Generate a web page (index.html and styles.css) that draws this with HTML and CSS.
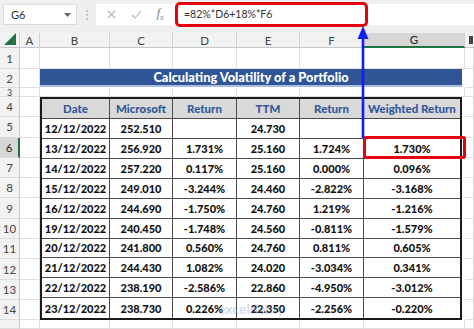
FILE: index.html
```html
<!DOCTYPE html>
<html lang="en">
<head>
    <meta charset="UTF-8">
    <title>Calculating Volatility of a Portfolio</title>
    <link rel="stylesheet" href="styles.css">
</head>
<body>
    <div class="bar">
        <div class="namebox">
            <span>G6</span>
            <svg width="7" height="4" viewBox="0 0 7 4"><path d="M0 0h7L3.5 4z" fill="#666"/></svg>
        </div>
        <div class="grip"><i></i><i></i><i></i></div>
        <div class="tools">
            <svg width="9" height="9" viewBox="0 0 9 9"><path d="M1 1l7 7M8 1L1 8" stroke="#b5b5b5" stroke-width="1.1"/></svg>
            <svg width="11" height="9" viewBox="0 0 11 9"><path d="M1 5l3 3 6-7" stroke="#b5b5b5" stroke-width="1.1" fill="none"/></svg>
            <span class="fx">f<sub>x</sub></span>
        </div>
        <div class="formula">=82%*D6+18%*F6</div>
    </div>

    <div class="sheet">
        <div class="corner"><svg width="12" height="12" viewBox="0 0 12 12"><path d="M12 0v12H0z" fill="#217346"/></svg></div>
        <div class="col">A</div>
        <div class="col">B</div>
        <div class="col">C</div>
        <div class="col">D</div>
        <div class="col">E</div>
        <div class="col">F</div>
        <div class="col sel">G</div>
        <div class="col end"><i></i></div>

        <div class="title">Calculating Volatility of a Portfolio</div>

        <div class="data">
            <div class="th">Date</div><div class="th">Microsoft</div><div class="th">Return</div><div class="th">TTM</div><div class="th">Return</div><div class="th">Weighted Return</div>
            <div>12/12/2022</div><div>252.510</div><div></div><div>24.730</div><div></div><div></div>
            <div>13/12/2022</div><div>256.920</div><div>1.731%</div><div>25.160</div><div>1.724%</div><div>1.730%</div>
            <div>14/12/2022</div><div>257.220</div><div>0.117%</div><div>25.160</div><div>0.000%</div><div>0.096%</div>
            <div>15/12/2022</div><div>249.010</div><div>-3.244%</div><div>24.460</div><div>-2.822%</div><div>-3.168%</div>
            <div>16/12/2022</div><div>244.690</div><div>-1.750%</div><div>24.760</div><div>1.219%</div><div>-1.216%</div>
            <div>19/12/2022</div><div>240.450</div><div>-1.748%</div><div>24.560</div><div>-0.811%</div><div>-1.579%</div>
            <div>20/12/2022</div><div>241.800</div><div>0.560%</div><div>24.760</div><div>0.811%</div><div>0.605%</div>
            <div>21/12/2022</div><div>244.430</div><div>1.082%</div><div>24.020</div><div>-3.034%</div><div>0.341%</div>
            <div>22/12/2022</div><div>238.190</div><div>-2.586%</div><div>22.860</div><div>-4.950%</div><div>-3.012%</div>
            <div class="last">23/12/2022</div><div class="last">238.730</div><div class="last">0.226%</div><div class="last">22.350</div><div class="last">-2.256%</div><div class="last">-0.220%</div>
        </div>

        <!-- row 1 -->
        <div class="rn">1</div>
        <div class="c"></div><div class="c"></div><div class="c"></div><div class="c"></div><div class="c"></div><div class="c"></div><div class="c"></div><div class="c"></div>
        <!-- row 2 -->
        <div class="rn">2</div>
        <div class="c"></div><div class="c"></div>
        <!-- row 3 -->
        <div class="rn small">3</div>
        <div class="c"></div><div class="c"></div><div class="c"></div><div class="c"></div><div class="c"></div><div class="c"></div><div class="c"></div><div class="c"></div>
        <!-- rows 4 - 14 -->
        <div class="rn">4</div><div class="c"></div><div class="c"></div>
        <div class="rn">5</div><div class="c"></div><div class="c"></div>
        <div class="rn sel">6</div><div class="c"></div><div class="c"></div>
        <div class="rn">7</div><div class="c"></div><div class="c"></div>
        <div class="rn">8</div><div class="c"></div><div class="c"></div>
        <div class="rn">9</div><div class="c"></div><div class="c"></div>
        <div class="rn">10</div><div class="c"></div><div class="c"></div>
        <div class="rn">11</div><div class="c"></div><div class="c"></div>
        <div class="rn">12</div><div class="c"></div><div class="c"></div>
        <div class="rn">13</div><div class="c"></div><div class="c"></div>
        <div class="rn">14</div><div class="c"></div><div class="c"></div>
        <!-- row 15 -->
        <div class="rn"></div>
        <div class="c"></div><div class="c"></div><div class="c"></div><div class="c"></div><div class="c"></div><div class="c"></div><div class="c"></div><div class="c"></div>
    </div>

    <!-- highlights drawn over the sheet -->
    <div class="mark mark-formula"></div>
    <div class="mark mark-cell"></div>
    <svg class="arrow" width="14" height="114" viewBox="0 0 14 114">
        <path d="M7 10V113" stroke="#1020e8" stroke-width="2.6"/>
        <path d="M7 1L1.5 14H12.5z" fill="#1020e8"/>
    </svg>
    <div class="watermark">exceldemy</div>
</body>
</html>
```

FILE: styles.css
```css
body {
    margin: 0;
    width: 474px;
    height: 329px;
    overflow: hidden;
    position: relative;
    background: #fff;
    font-family: Lato, "Liberation Sans", sans-serif;
}

/* formula bar */
.bar {
    height: 33px;
    box-sizing: border-box;
    padding: 4px 0 0 3px;
    background: #efefef;
    display: flex;
    align-items: flex-start;
}

.namebox {
    width: 74px;
    height: 21px;
    box-sizing: border-box;
    background: #fff;
    border: 1px solid #dcdcdc;
    display: flex;
    align-items: center;
    justify-content: space-between;
    padding: 0 5px 0 7px;
    font-size: 11px;
    color: #333;
}

.grip {
    width: 19px;
    height: 21px;
    display: flex;
    flex-direction: column;
    align-items: center;
    justify-content: center;
    gap: 2px;
}

.grip i {
    width: 2px;
    height: 2px;
    background: #c4c4c4;
}

.tools {
    width: 79px;
    height: 21px;
    background: #fff;
    display: flex;
    align-items: center;
    justify-content: space-around;
    padding: 0 4px;
    box-sizing: border-box;
}

.fx {
    font-family: "Liberation Serif", serif;
    font-style: italic;
    font-size: 12px;
    color: #777;
}

.fx sub {
    font-size: 8px;
}

.formula {
    flex: 1;
    height: 21px;
    margin-left: 1px;
    padding-left: 8px;
    background: #fff;
    font-size: 10.5px;
    line-height: 21px;
    color: #333;
}

/* worksheet */
.sheet {
    display: grid;
    grid-template-columns: 20px 20px 70px 63px 64px 63px 64px 101px 1fr;
    grid-template-rows: 15px 21px 19px 9px repeat(11, 20.3px) 1fr;
    height: 296px;
}

.corner,
.col {
    background: #f2f2f2;
    border-right: 1px solid #d0d0d0;
    border-bottom: 1px solid #c6c6c6;
    display: flex;
    align-items: center;
    justify-content: center;
    font-size: 11.5px;
    color: #444;
}

.corner {
    justify-content: flex-end;
    align-items: flex-end;
    padding: 0 3px 2px 0;
}

.col.sel {
    background: #d6d6d6;
    border-bottom: 2px solid #217346;
    color: #222;
}

.col.end {
    border-right: none;
    justify-content: flex-end;
    padding-right: 1px;
}

.col.end i {
    width: 4px;
    height: 8px;
    background: #444;
}

.rn {
    grid-column: 1;
    background: #f2f2f2;
    border-right: 1px solid #c6c6c6;
    border-bottom: 1px solid #dcdcdc;
    font-size: 11.5px;
    color: #444;
    display: flex;
    align-items: center;
    justify-content: center;
}

.rn.small {
    font-size: 9px;
    line-height: 7px;
    overflow: hidden;
    align-items: flex-end;
}

.rn.sel {
    background: #d6d6d6;
    border-right: 2px solid #217346;
    color: #222;
}

.c {
    border-right: 1px solid #dedede;
    border-bottom: 1px solid #dedede;
}

.title {
    grid-row: 3;
    grid-column: 3 / span 6;
    margin: 0 3px 1px 0;
    background: #2f5597;
    border-bottom: 2px solid #a9bde0;
    color: #fff;
    font-weight: 900;
    font-size: 12.8px;
    display: flex;
    align-items: center;
    justify-content: center;
}

.data {
    grid-row: 5 / span 11;
    grid-column: 3 / span 6;
    margin-right: 3px;
    border: 2px solid #1a1a1a;
    display: grid;
    grid-template-columns: 68px 63px 64px 63px 64px 1fr;
    grid-template-rows: repeat(11, 1fr);
}

.data div {
    border-right: 1px solid #4a4a4a;
    border-bottom: 1px solid #4a4a4a;
    display: flex;
    align-items: center;
    justify-content: center;
    font-size: 11px;
    font-weight: 900;
    color: #111;
}

.data div:nth-child(6n) {
    border-right: none;
}

.data div.last {
    border-bottom: none;
}

.data .th {
    background: #d9d9d9;
    color: #35589a;
    font-size: 11.5px;
}

/* callouts */
.mark {
    position: absolute;
    box-sizing: border-box;
    border: 3px solid #e3000f;
}

.mark-formula {
    left: 175px;
    top: 2px;
    width: 193px;
    height: 25px;
    border-radius: 5px;
}

.mark-cell {
    left: 363px;
    top: 136px;
    width: 103px;
    height: 23px;
    border-radius: 3px;
}

.arrow {
    position: absolute;
    left: 356px;
    top: 25px;
}

.watermark {
    position: absolute;
    left: 218px;
    top: 302px;
    font-size: 14px;
    font-weight: bold;
    color: #6e8fc4;
    opacity: 0.3;
    line-height: 14px;
}
```
